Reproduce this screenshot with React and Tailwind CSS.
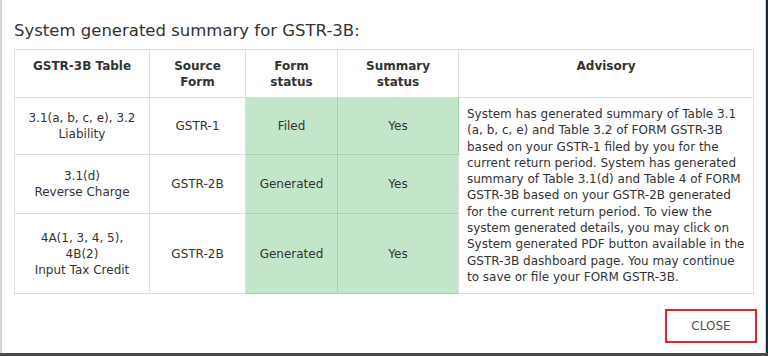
import React from "react";

const rows = [
  { t: ["3.1(a, b, c, e), 3.2", "Liability"], src: "GSTR-1", form: "Filed", h: "h-[57px]" },
  { t: ["3.1(d)", "Reverse Charge"], src: "GSTR-2B", form: "Generated", h: "h-[58px]" },
  { t: ["4A(1, 3, 4, 5),", "4B(2)", "Input Tax Credit"], src: "GSTR-2B", form: "Generated", h: "h-[80px]" },
];

export default function App() {
  return (
    <div
      className="flex w-[768px] h-[356px] flex-col bg-white text-[#333]"
      style={{ fontFamily: '"DejaVu Sans", Verdana, sans-serif' }}
    >
      <div className="flex flex-1 min-h-0">
        <div className="flex-1 border-l-2 border-[#d4d4d4] border-r border-r-[#d8d8d8] pl-[12px] pr-[8px] bg-white flex flex-col">
          <div className="pt-[19px] mb-[6px] text-[16.5px] leading-6 text-[#333]">
            System generated summary for GSTR-3B:
          </div>
          <table className="w-[740px] border-collapse border border-[#dedede] text-[12px] leading-4 table-fixed">
            <colgroup>
              <col className="w-[135px]" />
              <col className="w-[96px]" />
              <col className="w-[92px]" />
              <col className="w-[121px]" />
              <col />
            </colgroup>
            <thead>
              <tr className="h-[48px]">
                {[["GSTR-3B Table"], ["Source", "Form"], ["Form", "status"], ["Summary", "status"], ["Advisory"]].map((h, i) => (
                  <th key={i} className="border border-[#dedede] align-top pt-[8px] px-[6px] font-bold text-center text-[#333]">
                    {h.map((l, j) => (
                      <div key={j}>{l}</div>
                    ))}
                  </th>
                ))}
              </tr>
            </thead>
            <tbody>
              {rows.map((r, i) => (
                <tr key={i} className={r.h}>
                  <td className="border border-[#dedede] text-center align-middle px-[6px]">
                    {r.t.map((l, j) => (
                      <div key={j}>{l}</div>
                    ))}
                  </td>
                  <td className="border border-[#dedede] text-center align-middle">{r.src}</td>
                  <td className="border border-[#9fd5aa] bg-[#c3e6cb] text-center align-middle">{r.form}</td>
                  <td className="border border-[#9fd5aa] bg-[#c3e6cb] text-center align-middle">Yes</td>
                  {i === 0 && (
                    <td rowSpan={3} className="border border-[#dedede] align-top px-[8px] py-[8px] leading-[16.3px]">
                      System has generated summary of Table 3.1 (a, b, c, e) and Table 3.2 of FORM GSTR-3B based on your GSTR-1 filed by you for the current return period. System has generated summary of Table 3.1(d) and Table 4 of FORM GSTR-3B based on your GSTR-2B generated for the current return period. To view the system generated details, you may click on System generated PDF button available in the GSTR-3B dashboard page. You may continue to save or file your FORM GSTR-3B.
                    </td>
                  )}
                </tr>
              ))}
            </tbody>
          </table>
          <div className="flex justify-end mt-[15px] pr-[0px]">
            <button className="w-[92px] h-[34px] border-2 border-[#e8202a] bg-white text-[12px] text-[#4a5260] flex items-center justify-center">
              CLOSE
            </button>
          </div>
        </div>
        <div className="w-[2px] bg-[#1c2736]" />
      </div>
      <div className="h-[3px] bg-[#4a4a4a]" />
    </div>
  );
}
